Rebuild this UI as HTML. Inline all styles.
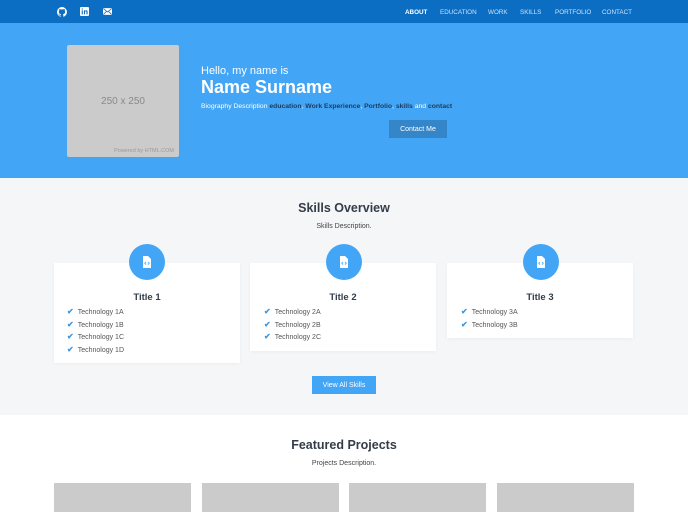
<!DOCTYPE html>
<html><head><style>
*{margin:0;padding:0;box-sizing:border-box}
body{width:688px;height:512px;overflow:hidden;font-family:"Liberation Sans",sans-serif;background:#fff;position:relative}
.nav{position:absolute;top:0;left:0;width:688px;height:23px;background:#0b6ec2;box-shadow:0 1px 3px rgba(0,0,0,.3)}
.nav a{position:absolute;top:9px;font-size:6.3px;color:#cfe3f7;letter-spacing:0}
.hero{position:absolute;top:23px;left:0;width:688px;height:155px;background:#42a5f5}
.img{position:absolute;left:67px;top:45px;width:112px;height:112px;background:#cbcbcb;border-radius:2px}
.skills{position:absolute;top:178px;left:0;width:688px;height:237px;background:#f4f6f8}
.card{position:absolute;background:#fff;top:263px;width:186px;box-shadow:0 1px 3px rgba(0,0,0,.04)}
.circ{position:absolute;top:244px;width:36px;height:36px;border-radius:50%;background:#42a5f5}
.t{position:absolute;font-size:9.5px;font-weight:bold;color:#333d4a;text-align:center;width:186px}
.li{position:absolute;font-size:7px;color:#555}
.li b{color:#3d96e0;margin-right:4px;font-size:8px}
.h2{position:absolute;width:688px;text-align:center;font-size:12.5px;font-weight:bold;color:#333d4a}
.sub{position:absolute;width:688px;text-align:center;font-size:7px;color:#444}
.proj{position:absolute;top:483px;height:29px;width:137px;background:#cbcbcb}
</style></head><body>
<div class="nav">
<svg style="position:absolute;left:57px;top:7px" width="10" height="10" viewBox="0 0 16 16"><path fill="#fff" d="M8 0a8 8 0 0 0-2.5 15.6c.4 0 .5-.2.5-.4v-1.5c-2.2.5-2.700-1-2.700-1-.4-.9-.9-1.200-.9-1.200-.7-.5.1-.5.1-.5.8.1 1.200.8 1.200.8.7 1.300 1.900.9 2.300.7.1-.5.3-.9.5-1.100-1.800-.2-3.600-.9-3.600-4 0-.9.3-1.600.8-2.100-.1-.2-.4-1 .1-2.100 0 0 .7-.2 2.200.8a7.500 7.500 0 0 1 4 0c1.500-1 2.200-.8 2.200-.8.4 1.100.2 1.900.1 2.100.5.6.8 1.300.8 2.100 0 3.100-1.900 3.800-3.600 4 .3.3.6.8.6 1.500v2.200c0 .2.1.5.6.4A8 8 0 0 0 8 0z"/></svg>
<svg style="position:absolute;left:80px;top:7px" width="9" height="9" viewBox="0 0 16 16"><rect width="16" height="16" rx="2" fill="#fff"/><path fill="#0b6ec2" d="M3 6h2v7H3zM4 2.5a1.1 1.1 0 1 1 0 2.2 1.1 1.1 0 0 1 0-2.2zM7 6h2v1c.4-.7 1.2-1.2 2.2-1.2 2 0 2.3 1.3 2.3 3V13h-2V9.3c0-.9 0-1.8-1.1-1.8S9 8.4 9 9.2V13H7z"/></svg>
<svg style="position:absolute;left:103px;top:8px" width="9" height="7" viewBox="0 0 16 12"><rect width="16" height="12" rx="1.5" fill="#fff"/><path d="M1 1l7 6 7-6M1 11l5-5M15 11l-5-5" stroke="#0b6ec2" stroke-width="1.3" fill="none"/></svg>
<a style="left:405px;color:#fff;font-weight:bold">ABOUT</a>
<a style="left:440px">EDUCATION</a>
<a style="left:488px">WORK</a>
<a style="left:520px">SKILLS</a>
<a style="left:555px">PORTFOLIO</a>
<a style="left:602px">CONTACT</a>
</div>
<div class="hero">
<div class="img" style="top:22px"><div style="position:absolute;top:51px;width:112px;text-align:center;font-size:10px;color:#8a8a8a">250 x 250</div><div style="position:absolute;bottom:3px;right:5px;font-size:5.5px;color:#999">Powered by HTML.COM</div></div>
<div style="position:absolute;left:201px;top:42px;font-size:11px;color:#fff">Hello, my name is</div>
<div style="position:absolute;left:201px;top:54px;font-size:18px;font-weight:bold;color:#fff">Name Surname</div>
<div style="position:absolute;left:201px;top:80px;font-size:6.8px;color:#fff">Biography Description <span style="color:#1d3b5c;font-weight:bold">education</span>, <span style="color:#1d3b5c;font-weight:bold">Work Experience</span>, <span style="color:#1d3b5c;font-weight:bold">Portfolio</span>, <span style="color:#1d3b5c;font-weight:bold">skills</span> and <span style="color:#1d3b5c;font-weight:bold">contact</span></div>
<div style="position:absolute;left:389px;top:97px;width:58px;height:18px;background:#3585c9;color:#fff;font-size:7px;text-align:center;line-height:20px">Contact Me</div>
</div>
<div class="skills"></div>
<div class="h2" style="top:201px">Skills Overview</div>
<div class="sub" style="top:223px">Skills Description.</div>
<div class="card" style="left:54px;height:100px"></div>
<div class="card" style="left:250px;height:88px"></div>
<div class="card" style="left:447px;height:75px"></div>
<div class="circ" style="left:129px"></div>
<div class="circ" style="left:326px"></div>
<div class="circ" style="left:523px"></div>
<svg style="position:absolute;left:142px;top:256px" width="10" height="12" viewBox="0 0 10 12"><path d="M1 0h5l3 3v9H1z" fill="#fff"/><path d="M4 6l-1.3 1.3L4 8.6M6 6l1.3 1.3L6 8.6" stroke="#42a5f5" stroke-width=".8" fill="none"/></svg>
<svg style="position:absolute;left:339px;top:256px" width="10" height="12" viewBox="0 0 10 12"><path d="M1 0h5l3 3v9H1z" fill="#fff"/><path d="M4 6l-1.3 1.3L4 8.6M6 6l1.3 1.3L6 8.6" stroke="#42a5f5" stroke-width=".8" fill="none"/></svg>
<svg style="position:absolute;left:536px;top:256px" width="10" height="12" viewBox="0 0 10 12"><path d="M1 0h5l3 3v9H1z" fill="#fff"/><path d="M4 6l-1.3 1.3L4 8.6M6 6l1.3 1.3L6 8.6" stroke="#42a5f5" stroke-width=".8" fill="none"/></svg>
<div class="t" style="left:54px;top:292px">Title 1</div>
<div class="t" style="left:250px;top:292px">Title 2</div>
<div class="t" style="left:447px;top:292px">Title 3</div>
<div class="li" style="left:67px;top:307px"><b>✔</b>Technology 1A</div>
<div class="li" style="left:67px;top:320px"><b>✔</b>Technology 1B</div>
<div class="li" style="left:67px;top:332px"><b>✔</b>Technology 1C</div>
<div class="li" style="left:67px;top:345px"><b>✔</b>Technology 1D</div>
<div class="li" style="left:264px;top:307px"><b>✔</b>Technology 2A</div>
<div class="li" style="left:264px;top:320px"><b>✔</b>Technology 2B</div>
<div class="li" style="left:264px;top:332px"><b>✔</b>Technology 2C</div>
<div class="li" style="left:461px;top:307px"><b>✔</b>Technology 3A</div>
<div class="li" style="left:461px;top:320px"><b>✔</b>Technology 3B</div>
<div style="position:absolute;left:312px;top:376px;width:64px;height:18px;background:#42a5f5;color:#fff;font-size:7px;text-align:center;line-height:20px">View All Skills</div>
<div class="h2" style="top:438px">Featured Projects</div>
<div class="sub" style="top:460px">Projects Description.</div>
<div class="proj" style="left:54px"></div>
<div class="proj" style="left:202px"></div>
<div class="proj" style="left:349px"></div>
<div class="proj" style="left:497px"></div>
</body></html>
